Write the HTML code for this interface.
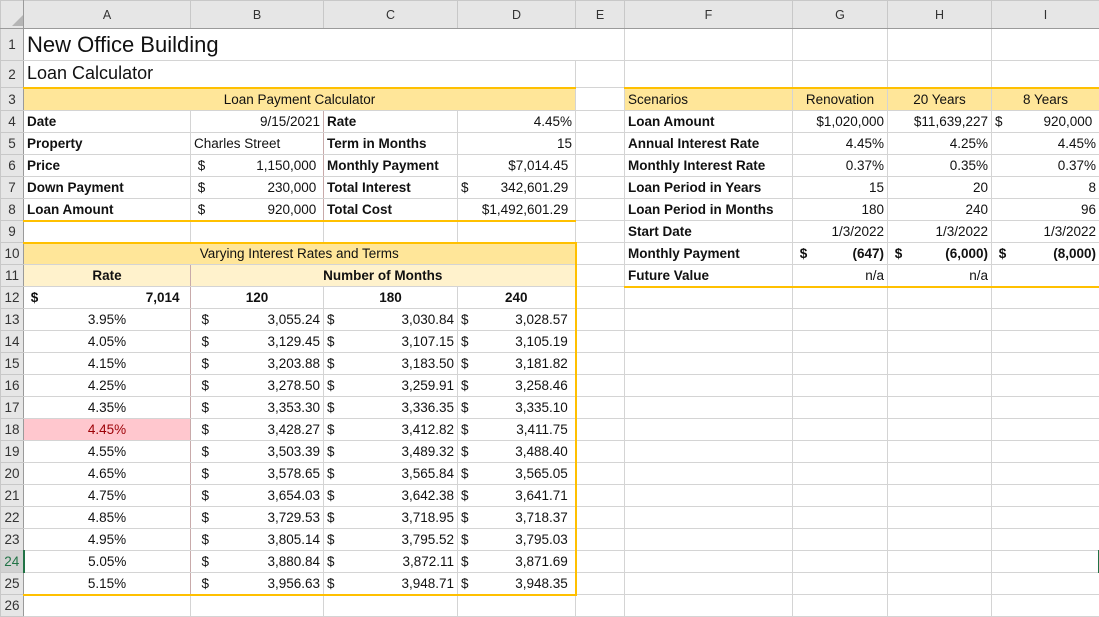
<!DOCTYPE html>
<html><head><meta charset="utf-8"><style>
body{margin:0;background:#fff;width:1099px;height:603px;overflow:hidden;font-family:"Liberation Sans","DejaVu Sans",sans-serif;}
table{border-collapse:collapse;table-layout:fixed;width:1099px;}
td{border:1px solid #d4d4d4;height:22px;padding:0 3px;font-size:13.5px;color:#111;white-space:nowrap;overflow:hidden;box-sizing:border-box;}
tr{height:22px}
tr.h td{background:#e6e6e6;color:#333;text-align:center;font-size:12.5px;height:28px;border-color:#c8c8c8;border-bottom:1px solid #9a9a9a}
td.rn{background:#e6e6e6;color:#333;text-align:center;padding:0;font-size:13.5px;border-color:#c8c8c8;border-right:1px solid #9a9a9a}
.r{text-align:right}.c{text-align:center}.b{font-weight:bold}
.d{float:left}
.y{background:#FFE699}.ly{background:#FFF2CC}
.tt{border-top:2px solid #FFC000}.bb{border-bottom:2px solid #FFC000}
.rr{border-right:2px solid #FFC000}
.br{border-right:1px solid #c8aaaa}
.pk{background:#FFC7CE;color:#9C0006}
</style></head><body>
<table>
<colgroup><col style="width:23px"><col style="width:167px"><col style="width:133px"><col style="width:134px"><col style="width:118px"><col style="width:49px"><col style="width:168px"><col style="width:95px"><col style="width:104px"><col style="width:108px"></colgroup>
<tr class="h" style="height:28px"><td style="border-right:1px solid #9a9a9a"><svg width="12" height="12" style="display:block;margin:12px 0 0 8px"><polygon points="11,0 11,11 0,11" fill="#b5b5b5"/></svg></td><td>A</td><td>B</td><td>C</td><td>D</td><td>E</td><td>F</td><td>G</td><td>H</td><td>I</td></tr>
<tr style="height:32px"><td class="rn" style="height:32px">1</td><td colspan="4" style="font-size:22px;height:32px;border-right-color:transparent">New Office Building</td><td></td><td></td><td></td><td></td><td></td></tr>
<tr style="height:27px"><td class="rn" style="height:27px">2</td><td colspan="4" style="font-size:18px;height:27px">Loan Calculator</td><td></td><td></td><td></td><td></td><td></td></tr>
<tr style="height:23px"><td class="rn" style="height:23px">3</td><td colspan="4" class="y tt c">Loan Payment Calculator</td><td></td><td class="y tt">Scenarios</td><td class="y tt c">Renovation</td><td class="y tt c">20 Years</td><td class="y tt c">8 Years</td></tr>
<tr><td class="rn">4</td><td class="b">Date</td><td class="r br">9/15/2021</td><td class="b">Rate</td><td class="r">4.45%</td><td></td><td class="b">Loan Amount</td><td class="r">$1,020,000</td><td class="r">$11,639,227</td><td class="r"><span class="d">$</span>920,000&nbsp;</td></tr>
<tr><td class="rn">5</td><td class="b">Property</td><td class="br">Charles Street</td><td class="b">Term in Months</td><td class="r">15</td><td></td><td class="b">Annual Interest Rate</td><td class="r">4.45%</td><td class="r">4.25%</td><td class="r">4.45%</td></tr>
<tr><td class="rn">6</td><td class="b">Price</td><td class="r br"><span class="d">&nbsp;$</span>1,150,000&nbsp;</td><td class="b">Monthly Payment</td><td class="r">$7,014.45&nbsp;</td><td></td><td class="b">Monthly Interest Rate</td><td class="r">0.37%</td><td class="r">0.35%</td><td class="r">0.37%</td></tr>
<tr><td class="rn">7</td><td class="b">Down Payment</td><td class="r br"><span class="d">&nbsp;$</span>230,000&nbsp;</td><td class="b">Total Interest</td><td class="r"><span class="d">$</span>342,601.29&nbsp;</td><td></td><td class="b">Loan Period in Years</td><td class="r">15</td><td class="r">20</td><td class="r">8</td></tr>
<tr><td class="rn">8</td><td class="b bb">Loan Amount</td><td class="r br bb"><span class="d">&nbsp;$</span>920,000&nbsp;</td><td class="b bb">Total Cost</td><td class="r bb">$1,492,601.29&nbsp;</td><td></td><td class="b">Loan Period in Months</td><td class="r">180</td><td class="r">240</td><td class="r">96</td></tr>
<tr><td class="rn">9</td><td></td><td></td><td></td><td></td><td></td><td class="b">Start Date</td><td class="r">1/3/2022</td><td class="r">1/3/2022</td><td class="r">1/3/2022</td></tr>
<tr><td class="rn">10</td><td colspan="4" class="y tt c rr">Varying Interest Rates and Terms</td><td></td><td class="b">Monthly Payment</td><td class="r b"><span class="d">&nbsp;$</span>(647)</td><td class="r b"><span class="d">&nbsp;$</span>(6,000)</td><td class="r b"><span class="d">&nbsp;$</span>(8,000)</td></tr>
<tr><td class="rn">11</td><td class="ly c b br">Rate</td><td colspan="3" class="ly c b rr">Number of Months</td><td></td><td class="b bb">Future Value</td><td class="r bb">n/a</td><td class="r bb">n/a</td><td class="bb"></td></tr>
<tr><td class="rn">12</td><td class="r b br"><span class="d">&nbsp;$</span>7,014&nbsp;&nbsp;</td><td class="c b">120</td><td class="c b">180</td><td class="c b rr">240</td><td></td><td></td><td></td><td></td><td></td></tr>
<tr><td class="rn">13</td><td class="c br">3.95%</td><td class="r"><span class="d">&nbsp;&nbsp;$</span>3,055.24</td><td class="r"><span class="d">$</span>3,030.84</td><td class="r rr"><span class="d">$</span>3,028.57&nbsp;</td><td></td><td></td><td></td><td></td><td></td></tr>
<tr><td class="rn">14</td><td class="c br">4.05%</td><td class="r"><span class="d">&nbsp;&nbsp;$</span>3,129.45</td><td class="r"><span class="d">$</span>3,107.15</td><td class="r rr"><span class="d">$</span>3,105.19&nbsp;</td><td></td><td></td><td></td><td></td><td></td></tr>
<tr><td class="rn">15</td><td class="c br">4.15%</td><td class="r"><span class="d">&nbsp;&nbsp;$</span>3,203.88</td><td class="r"><span class="d">$</span>3,183.50</td><td class="r rr"><span class="d">$</span>3,181.82&nbsp;</td><td></td><td></td><td></td><td></td><td></td></tr>
<tr><td class="rn">16</td><td class="c br">4.25%</td><td class="r"><span class="d">&nbsp;&nbsp;$</span>3,278.50</td><td class="r"><span class="d">$</span>3,259.91</td><td class="r rr"><span class="d">$</span>3,258.46&nbsp;</td><td></td><td></td><td></td><td></td><td></td></tr>
<tr><td class="rn">17</td><td class="c br">4.35%</td><td class="r"><span class="d">&nbsp;&nbsp;$</span>3,353.30</td><td class="r"><span class="d">$</span>3,336.35</td><td class="r rr"><span class="d">$</span>3,335.10&nbsp;</td><td></td><td></td><td></td><td></td><td></td></tr>
<tr><td class="rn">18</td><td class="c br pk">4.45%</td><td class="r"><span class="d">&nbsp;&nbsp;$</span>3,428.27</td><td class="r"><span class="d">$</span>3,412.82</td><td class="r rr"><span class="d">$</span>3,411.75&nbsp;</td><td></td><td></td><td></td><td></td><td></td></tr>
<tr><td class="rn">19</td><td class="c br">4.55%</td><td class="r"><span class="d">&nbsp;&nbsp;$</span>3,503.39</td><td class="r"><span class="d">$</span>3,489.32</td><td class="r rr"><span class="d">$</span>3,488.40&nbsp;</td><td></td><td></td><td></td><td></td><td></td></tr>
<tr><td class="rn">20</td><td class="c br">4.65%</td><td class="r"><span class="d">&nbsp;&nbsp;$</span>3,578.65</td><td class="r"><span class="d">$</span>3,565.84</td><td class="r rr"><span class="d">$</span>3,565.05&nbsp;</td><td></td><td></td><td></td><td></td><td></td></tr>
<tr><td class="rn">21</td><td class="c br">4.75%</td><td class="r"><span class="d">&nbsp;&nbsp;$</span>3,654.03</td><td class="r"><span class="d">$</span>3,642.38</td><td class="r rr"><span class="d">$</span>3,641.71&nbsp;</td><td></td><td></td><td></td><td></td><td></td></tr>
<tr><td class="rn">22</td><td class="c br">4.85%</td><td class="r"><span class="d">&nbsp;&nbsp;$</span>3,729.53</td><td class="r"><span class="d">$</span>3,718.95</td><td class="r rr"><span class="d">$</span>3,718.37&nbsp;</td><td></td><td></td><td></td><td></td><td></td></tr>
<tr><td class="rn">23</td><td class="c br">4.95%</td><td class="r"><span class="d">&nbsp;&nbsp;$</span>3,805.14</td><td class="r"><span class="d">$</span>3,795.52</td><td class="r rr"><span class="d">$</span>3,795.03&nbsp;</td><td></td><td></td><td></td><td></td><td></td></tr>
<tr><td class="rn" style="color:#217346;background:#d2d2d2;border-right:2px solid #217346">24</td><td class="c br">5.05%</td><td class="r"><span class="d">&nbsp;&nbsp;$</span>3,880.84</td><td class="r"><span class="d">$</span>3,872.11</td><td class="r rr"><span class="d">$</span>3,871.69&nbsp;</td><td></td><td></td><td></td><td></td><td style="border-right:3px solid #217346"></td></tr>
<tr><td class="rn">25</td><td class="c br bb">5.15%</td><td class="r bb"><span class="d">&nbsp;&nbsp;$</span>3,956.63</td><td class="r bb"><span class="d">$</span>3,948.71</td><td class="r rr bb"><span class="d">$</span>3,948.35&nbsp;</td><td></td><td></td><td></td><td></td><td></td></tr>
<tr><td class="rn">26</td><td></td><td></td><td></td><td></td><td></td><td></td><td></td><td></td><td></td></tr>
</table>
</body></html>
